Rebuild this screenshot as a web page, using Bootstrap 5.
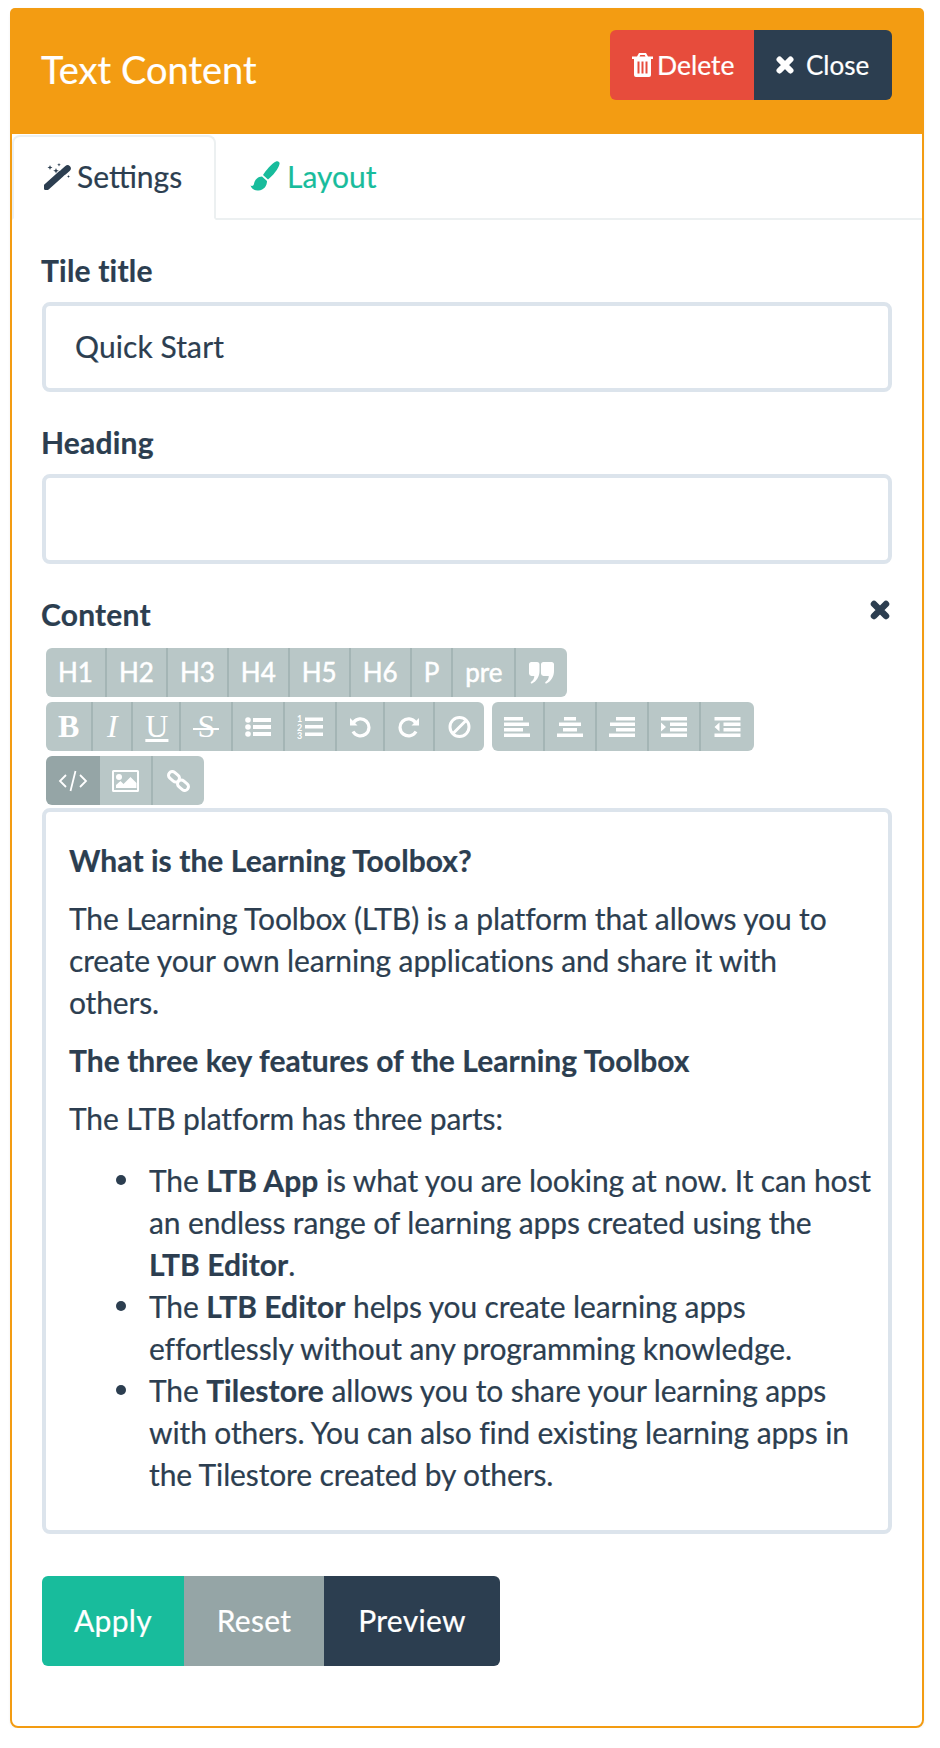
<!DOCTYPE html>
<html lang="en">
<head>
    <meta charset="UTF-8">
    <meta name="viewport" content="width=device-width, initial-scale=1.0">
    <title>Text Content</title>

    <link rel="stylesheet" href="https://cdn.jsdelivr.net/npm/bootstrap@5.3.0/dist/css/bootstrap.min.css">

    <style>
        body {
            background-color: #fff;
            color: #2c3e50;
            font-family: "Lato", "Liberation Sans", sans-serif;
            font-size: 30px;
            line-height: 42px;
            -webkit-text-stroke: .2px;
        }

        .tile-panel {
            margin: 8px 16px 0 10px;
            height: 1720px;
            border: 2px solid #f39c12;
            border-radius: 8px;
            box-shadow: 0 1px 3px rgba(0, 0, 0, .06);
        }

        .tile-head {
            height: 126px;
            margin: -2px -2px 0;
            padding: 22px 32px 0 31px;
            background-color: #f39c12;
            border: 0;
            border-radius: 8px 8px 0 0;
            color: #fff;
        }

        .tile-head h3 {
            margin: 0;
            padding-top: 14px;
            font-size: 38px;
            line-height: 50px;
            font-weight: 400;
        }

        .btn-group.head-group > .head-btn + .head-btn,
        .btn-group.form-actions > .action-btn + .action-btn { margin-left: 0; }

        .head-btn {
            height: 70px;
            padding: 0 0 0 22px;
            border: 0;
            font-size: 26.500px;
            line-height: 70px;
            color: #fff;
            display: flex;
            align-items: center;
            gap: 4px;
        }

        .head-btn svg { flex-shrink: 0; }
        .head-btn.is-red { background-color: #e74c3c; width: 144px; }
        .head-btn.is-navy { background-color: #2c3e50; width: 138px; gap: 12px; font-size: 26px; }
        .head-btn:hover { color: #fff; }

        .tile-tabs {
            height: 86px;
            padding-top: 1px;
            border-bottom: 2px solid #ecf0f1;
        }

        .tile-tabs .nav-link {
            height: 85px;
            padding: 0 30px 3px;
            border: 2px solid transparent;
            border-radius: 8px 8px 0 0;
            margin: 0;
            font-size: 30px;
            line-height: 76px;
            color: #18bc9c;
            display: flex;
            align-items: center;
            gap: 6px;
        }

        .tile-tabs .nav-link.active {
            width: 204px;
            color: #2c3e50;
            background-color: #fff;
            border-color: #ecf0f1 #ecf0f1 #fff;
        }

        .tile-tabs .nav-item + .nav-item .nav-link { padding-left: 32px; }

        .tile-form { padding: 30px 30px 0; }

        .field-label {
            display: block;
            margin-bottom: 12px;
            margin-left: -1px;
            font-weight: 700;
            font-size: 30px;
            line-height: 40px;
            letter-spacing: .2px;
        }

        .tile-input {
            height: 90px;
            padding: 0 29px 2px;
            margin-bottom: 30px;
            border: 4px solid #dce4ec;
            border-radius: 8px;
            font-size: 30px;
            letter-spacing: .1px;
            color: #2c3e50;
        }

        .content-head { height: 54px; }
        .content-head .field-label { margin: 0 0 0 -1px; }
        .content-head svg { margin: 6px 2px 0 0; }

        .tool-row { height: 54px; padding-left: 4px; gap: 8px; }
        .tool-row.is-last { height: 52px; }

        .tool-group {
            height: 49px;
            display: flex;
            border-radius: 6px;
            overflow: hidden;
        }

        .tool-btn {
            height: 49px;
            padding: 0 12px;
            border: 0;
            border-right: 2px solid #a4b5b5;
            border-radius: 0;
            background-color: #b9c7c7;
            color: #fff;
            font-size: 26px;
            line-height: 49px;
            -webkit-text-stroke: .5px;
            display: flex;
            align-items: center;
            justify-content: center;
        }

        .tool-btn:last-child { border-right: 0; }
        .tool-btn.is-on { background-color: #95a5a6; border-right: 0; }
        .tool-btn:hover { color: #fff; background-color: #b9c7c7; }

        .serif-glyph {
            display: block;
            font-family: "Liberation Serif", serif;
            font-size: 32px;
            text-align: center;
            -webkit-text-stroke: 0;
        }

        .glyph-i { width: 14px; }
        .glyph-u { width: 22px; }
        .glyph-s {
            width: 26px;
            background: linear-gradient(#fff, #fff) center 56% / 100% 2px no-repeat;
        }

        .tile-editor {
            height: 726px;
            padding: 27px 17px 0 23px;
            border: 4px solid #dce4ec;
            border-radius: 8px;
            letter-spacing: -.13px;
        }

        .tile-editor strong { letter-spacing: .05px; }
        .tile-editor p { margin: 0 0 16px; }
        .tile-editor p.lead-in { margin-bottom: 20px; }
        .tile-editor ul { margin: 0; padding-left: 80px; list-style: none; }
        .tile-editor li { position: relative; }

        .tile-editor li::before {
            content: "";
            position: absolute;
            left: -33px;
            top: 16px;
            width: 10px;
            height: 10px;
            border-radius: 50%;
            background-color: #2c3e50;
        }

        .form-actions { margin-top: 42px; display: flex; width: fit-content; }

        .action-btn {
            height: 90px;
            border: 0;
            font-size: 30px;
            line-height: 88px;
            letter-spacing: .3px;
            padding: 0 0 2px;
            color: #fff;
        }

        .action-btn:hover { color: #fff; }
        .action-btn.is-teal { width: 142px; background-color: #18bc9c; }
        .action-btn.is-grey { width: 140px; background-color: #95a5a6; }
        .action-btn.is-navy { width: 176px; background-color: #2c3e50; }
    </style>
</head>
<body>

    <div class="card tile-panel">

        <!-- Header -->
        <div class="card-header tile-head d-flex justify-content-between align-items-start">
            <h3>Text Content</h3>
            <div class="btn-group head-group">
                <button type="button" class="btn head-btn is-red">
                    <svg width="21" height="24" viewBox="0 0 21 24" fill="#fff"><path fill-rule="evenodd" d="M7 0h7l2 3.500h5V6h-2v16a2 2 0 0 1-2 2H4a2 2 0 0 1-2-2V6H0V3.500h5zM8.300 2 7.500 3.500h6L12.700 2zM5.500 8.500v12h2v-12zM9.500 8.500v12h2v-12zM13.500 8.500v12h2v-12z"/></svg>
                    Delete
                </button>
                <button type="button" class="btn head-btn is-navy">
                    <svg width="18" height="18" viewBox="0 0 18 18"><path d="M3.500 3.500l11 11M14.500 3.500l-11 11" stroke="#fff" stroke-width="6" stroke-linecap="round"/></svg>
                    Close
                </button>
            </div>
        </div>

        <!-- Tabs -->
        <ul class="nav nav-tabs tile-tabs">
            <li class="nav-item">
                <a class="nav-link active" href="#">
                    <svg width="27" height="28" viewBox="0 0 27 28" fill="#2c3e50">
                        <path d="M2.500 25l14.500-13" stroke="#2c3e50" stroke-width="6.500" stroke-linecap="round"/>
                        <path d="M19.500 10l4-3.500" stroke="#2c3e50" stroke-width="6.500" stroke-linecap="round"/>
                        <path d="M6 3l.7 1.800 1.800.7-1.800.7L6 8l-.7-1.800-1.800-.7 1.800-.7zM12 6l.8 2 2 .8-2 .8-.8 2-.8-2-2-.8 2-.8zM15 1l.5 1.300 1.300.5-1.300.5-.5 1.300-.5-1.300-1.300-.5 1.300-.5zM24.500 13l.4 1.100 1.100.4-1.100.4-.4 1.100-.4-1.100-1.100-.4 1.100-.4z"/>
                    </svg>
                    Settings
                </a>
            </li>
            <li class="nav-item">
                <a class="nav-link" href="#">
                    <svg width="31" height="30" viewBox="0 0 31 30" fill="#18bc9c">
                        <path d="M26 .500c2-1 4 .500 3.500 2.500-1 5-7 12-11.500 15.500l-5-4.500C16 9.500 21 3 26 .500z"/>
                        <path d="M12 15.500l5 4.500c0 5-3 9-8.500 9.500C5 30 1.500 28 .500 24.500c1.500 1 3 .500 3.500-1.500.500-4 4-7.500 8-7.500z"/>
                    </svg>
                    Layout
                </a>
            </li>
        </ul>

        <!-- Form -->
        <form class="tile-form">
            <label class="field-label" for="tileTitle">Tile title</label>
            <input type="text" id="tileTitle" class="form-control tile-input" value="Quick Start">

            <label class="field-label" for="tileHeading">Heading</label>
            <input type="text" id="tileHeading" class="form-control tile-input">

            <div class="content-head d-flex justify-content-between align-items-start">
                <label class="field-label">Content</label>
                <svg width="20" height="20" viewBox="0 0 20 20"><path d="M4 4l12 12M16 4L4 16" stroke="#2c3e50" stroke-width="6.500" stroke-linecap="round"/></svg>
            </div>

            <!-- Editor toolbar -->
            <div class="d-flex tool-row">
                <div class="tool-group">
                    <button type="button" class="btn tool-btn">H1</button>
                    <button type="button" class="btn tool-btn">H2</button>
                    <button type="button" class="btn tool-btn">H3</button>
                    <button type="button" class="btn tool-btn">H4</button>
                    <button type="button" class="btn tool-btn">H5</button>
                    <button type="button" class="btn tool-btn">H6</button>
                    <button type="button" class="btn tool-btn">P</button>
                    <button type="button" class="btn tool-btn">pre</button>
                    <button type="button" class="btn tool-btn">
                        <svg width="27" height="22" viewBox="-1 0 27 22" fill="#fff"><path d="M14.500 0h8A2.500 2.500 0 0 1 25 2.500V9c0 5.500-3 10.500-7.500 12.500-1 .400-1.800-1-1-1.600 2-1.500 3.300-3.400 3.300-6H14.500A2.500 2.500 0 0 1 12 11.500v-9A2.500 2.500 0 0 1 14.500 0zM2.500 0h5.500A2.500 2.500 0 0 1 10.500 2.500V9c0 5.500-3 10.500-7.500 12.500-1 .400-1.800-1-1-1.600 2-1.500 3.300-3.400 3.300-6H2.500A2.500 2.500 0 0 1 0 11.500v-9A2.500 2.500 0 0 1 2.500 0z"/></svg>
                    </button>
                </div>
            </div>
            <div class="d-flex tool-row">
                <div class="tool-group">
                    <button type="button" class="btn tool-btn"><span class="serif-glyph fw-bold">B</span></button>
                    <button type="button" class="btn tool-btn"><span class="serif-glyph glyph-i fst-italic">I</span></button>
                    <button type="button" class="btn tool-btn"><span class="serif-glyph glyph-u text-decoration-underline">U</span></button>
                    <button type="button" class="btn tool-btn"><span class="serif-glyph glyph-s">S</span></button>
                    <button type="button" class="btn tool-btn">
                        <svg width="26" height="20" viewBox="0 0 26 20" fill="#fff"><circle cx="3" cy="3" r="2.800"/><circle cx="3" cy="10" r="2.800"/><circle cx="3" cy="17" r="2.800"/><path d="M8 1h18v4H8zM8 8h18v4H8zM8 15h18v4H8z"/></svg>
                    </button>
                    <button type="button" class="btn tool-btn">
                        <svg width="26" height="26" viewBox="0 0 26 26" fill="#fff"><text x="0" y="8" font-size="9" font-family="Lato" font-weight="700">1</text><text x="0" y="16.500" font-size="9" font-family="Lato" font-weight="700">2</text><text x="0" y="25" font-size="9" font-family="Lato" font-weight="700">3</text><path d="M8 3.500h18v3.500H8zM8 11h18v3.500H8zM8 18.500h18V22H8z"/></svg>
                    </button>
                    <button type="button" class="btn tool-btn">
                        <svg width="22" height="22" viewBox="0 0 22 22" fill="none"><path d="M4.500 6.500A8.500 8.500 0 1 1 4 15.500" stroke="#fff" stroke-width="3.200"/><path d="M1 2l7.500 7.500H1z" fill="#fff"/></svg>
                    </button>
                    <button type="button" class="btn tool-btn">
                        <svg width="24" height="22" viewBox="0 0 24 22" fill="none"><path d="M18.500 6.500A8.500 8.500 0 1 0 19 15.500" stroke="#fff" stroke-width="3.200"/><path d="M22 2l-7.500 7.500H22z" fill="#fff"/></svg>
                    </button>
                    <button type="button" class="btn tool-btn">
                        <svg width="25" height="22" viewBox="-1 0 25 22" fill="none" stroke="#fff" stroke-width="3"><circle cx="11.500" cy="11" r="9.500"/><path d="M5 17.500l13-13"/></svg>
                    </button>
                </div>
                <div class="tool-group">
                    <button type="button" class="btn tool-btn">
                        <svg width="27" height="20" viewBox="0 0 27 20" fill="#fff"><path d="M0 0h19v3.500H0zM0 5.500h25v3.500H0zM0 11h19v3.500H0zM0 16.500h26V20H0z"/></svg>
                    </button>
                    <button type="button" class="btn tool-btn">
                        <svg width="26" height="20" viewBox="0 0 26 20" fill="#fff"><path d="M7 0h12v3.500H7zM2 5.500h22v3.500H2zM6 11h14v3.500H6zM0 16.500h26V20H0z"/></svg>
                    </button>
                    <button type="button" class="btn tool-btn">
                        <svg width="26" height="20" viewBox="0 0 26 20" fill="#fff"><path d="M7 0h19v3.500H7zM1 5.500h25v3.500H1zM7 11h19v3.500H7zM0 16.500h26V20H0z"/></svg>
                    </button>
                    <button type="button" class="btn tool-btn">
                        <svg width="26" height="20" viewBox="0 0 26 20" fill="#fff"><path d="M0 0h26v3.500H0zM9 5.500h17v3.500H9zM9 11h17v3.500H9zM0 16.500h26V20H0zM0 5.500l5 4.500-5 4.500z"/></svg>
                    </button>
                    <button type="button" class="btn tool-btn">
                        <svg width="29" height="20" viewBox="-1.500 0 29 20" fill="#fff"><path d="M0 0h26v3.500H0zM9 5.500h17v3.500H9zM9 11h17v3.500H9zM0 16.500h26V20H0zM5 5.500v9L0 10z"/></svg>
                    </button>
                </div>
            </div>
            <div class="d-flex tool-row is-last">
                <div class="tool-group">
                    <button type="button" class="btn tool-btn is-on">
                        <svg width="30" height="22" viewBox="-1 0 30 22" fill="none" stroke="#fff" stroke-width="1.800"><path d="M7 5l-6 6 6 6M21 5l6 6-6 6M16.500 1l-5 20"/></svg>
                    </button>
                    <button type="button" class="btn tool-btn">
                        <svg width="27" height="22" viewBox="0 0 27 22" fill="#fff"><path fill-rule="evenodd" d="M1.500 0h24A1.500 1.500 0 0 1 27 1.500v19a1.500 1.500 0 0 1-1.500 1.500h-24A1.500 1.500 0 0 1 0 20.500v-19A1.500 1.500 0 0 1 1.500 0zM2 2v18h23V2z"/><circle cx="7" cy="7" r="3"/><path d="M4 18v-3l4.500-4 3 3 7-7 6 6v5z"/></svg>
                    </button>
                    <button type="button" class="btn tool-btn">
                        <svg width="27" height="24" viewBox="-1.500 0 27 24" fill="none" stroke="#fff" stroke-width="3"><rect x="1.500" y="4" width="12" height="7.500" rx="3.700" transform="rotate(40 7.500 7.750)"/><rect x="10.500" y="12.500" width="12" height="7.500" rx="3.700" transform="rotate(40 16.500 16.250)"/></svg>
                    </button>
                </div>
            </div>

            <!-- Editor content -->
            <div class="tile-editor">
                <p><strong>What is the Learning Toolbox?</strong></p>
                <p>The Learning Toolbox (LTB) is a platform that allows you to create your own learning applications and share it with others.</p>
                <p><strong>The three key features of the Learning Toolbox</strong></p>
                <p class="lead-in">The LTB platform has three parts:</p>
                <ul>
                    <li>The <strong>LTB App</strong> is what you are looking at now. It can host an endless range of learning apps created using the <strong>LTB&nbsp;Editor</strong>.</li>
                    <li>The <strong>LTB Editor</strong> helps you create learning apps effortlessly without any programming knowledge.</li>
                    <li>The <strong>Tilestore</strong> allows you to share your learning apps with others. You can also find existing learning apps in the Tilestore created by others.</li>
                </ul>
            </div>

            <div class="btn-group form-actions">
                <button type="button" class="btn action-btn is-teal">Apply</button>
                <button type="button" class="btn action-btn is-grey">Reset</button>
                <button type="button" class="btn action-btn is-navy">Preview</button>
            </div>
        </form>
    </div>

    <script src="https://cdn.jsdelivr.net/npm/bootstrap@5.3.0/dist/js/bootstrap.bundle.min.js"></script>
</body>
</html>
